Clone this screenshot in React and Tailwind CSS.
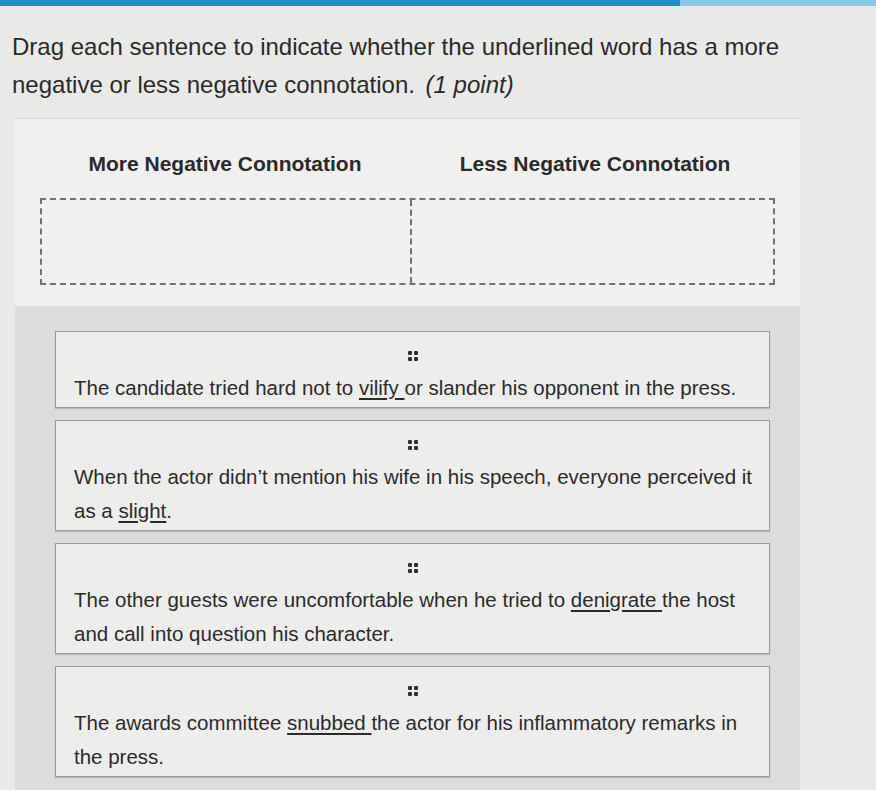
import React from "react";

const font = { fontFamily: '"Liberation Sans", Arial, sans-serif' };

// lines are broken as in the original layout
const items = [
  {
    id: 1,
    lines: [["The candidate tried hard not to ", "vilify ", "or slander his opponent in the press."]],
  },
  {
    id: 2,
    lines: [
      ["When the actor didn\u2019t mention his wife in his speech, everyone perceived it"],
      ["as a ", "slight", "."],
    ],
  },
  {
    id: 3,
    lines: [
      ["The other guests were uncomfortable when he tried to ", "denigrate ", "the host"],
      ["and call into question his character."],
    ],
  },
  {
    id: 4,
    lines: [
      ["The awards committee ", "snubbed ", "the actor for his inflammatory remarks in"],
      ["the press."],
    ],
  },
];

function Handle() {
  return (
    <div className="grid grid-cols-2 gap-[2px] w-[10px] mx-auto">
      <span className="w-[4px] h-[4px] rounded-[1px] bg-[#2e2e2e]" />
      <span className="w-[4px] h-[4px] rounded-[1px] bg-[#2e2e2e]" />
      <span className="w-[4px] h-[4px] rounded-[1px] bg-[#2e2e2e]" />
      <span className="w-[4px] h-[4px] rounded-[1px] bg-[#2e2e2e]" />
    </div>
  );
}

function Card({ lines }) {
  return (
    <div className="border border-[#9a9a98] bg-[#ededec] shadow-[0_1px_1px_rgba(0,0,0,0.15)] px-[18px] pt-[19px] pb-[2px]">
      <Handle />
      <div className="mt-[10px] text-[20.5px] leading-[34px] text-[#2b2b2b] whitespace-nowrap">
        {lines.map(([a, u, b], i) => (
          <p key={i}>
            {a}
            {u && <span className="underline underline-offset-[3px]">{u}</span>}
            {b}
          </p>
        ))}
      </div>
    </div>
  );
}

export default function App() {
  return (
    <div className="w-[876px] h-[790px] overflow-hidden bg-[#e9e9e7]" style={font}>
      <div className="flex h-[6px]">
        <div className="w-[680px] bg-[#1f8fc8]" />
        <div className="flex-1 bg-[#8fc7e3]" />
      </div>

      <div className="px-[12px] pt-[22px] text-[24px] leading-[38px] text-[#2a2a2a]">
        <p>Drag each sentence to indicate whether the underlined word has a more</p>
        <p>
          negative or less negative connotation. <i className="ml-1">(1 point)</i>
        </p>
      </div>

      <div className="ml-[15px] mt-[14px] w-[785px] border-t border-[#d6d6d4]">
        <div className="bg-[#f0f0ee] pt-[33px] pb-[21px]">
          <div className="flex text-[21px] leading-[24px] font-bold text-[#2a2a2a]">
            <div className="w-[420px] text-center">More Negative Connotation</div>
            <div className="w-[320px] text-center whitespace-nowrap">Less Negative Connotation</div>
          </div>
          <div className="ml-[25px] mt-[22px] w-[735px] h-[87px] flex border-2 border-dashed border-[#727270]">
            <div className="w-[370px] border-r-2 border-dashed border-[#727270]" />
            <div className="flex-1" />
          </div>
        </div>

        <div className="bg-[#dcdcdb] pt-[25px] pb-[20px] pl-[40px] pr-[30px] flex flex-col gap-[12px]">
          {items.map((it) => (
            <Card key={it.id} lines={it.lines} />
          ))}
        </div>
      </div>
    </div>
  );
}
